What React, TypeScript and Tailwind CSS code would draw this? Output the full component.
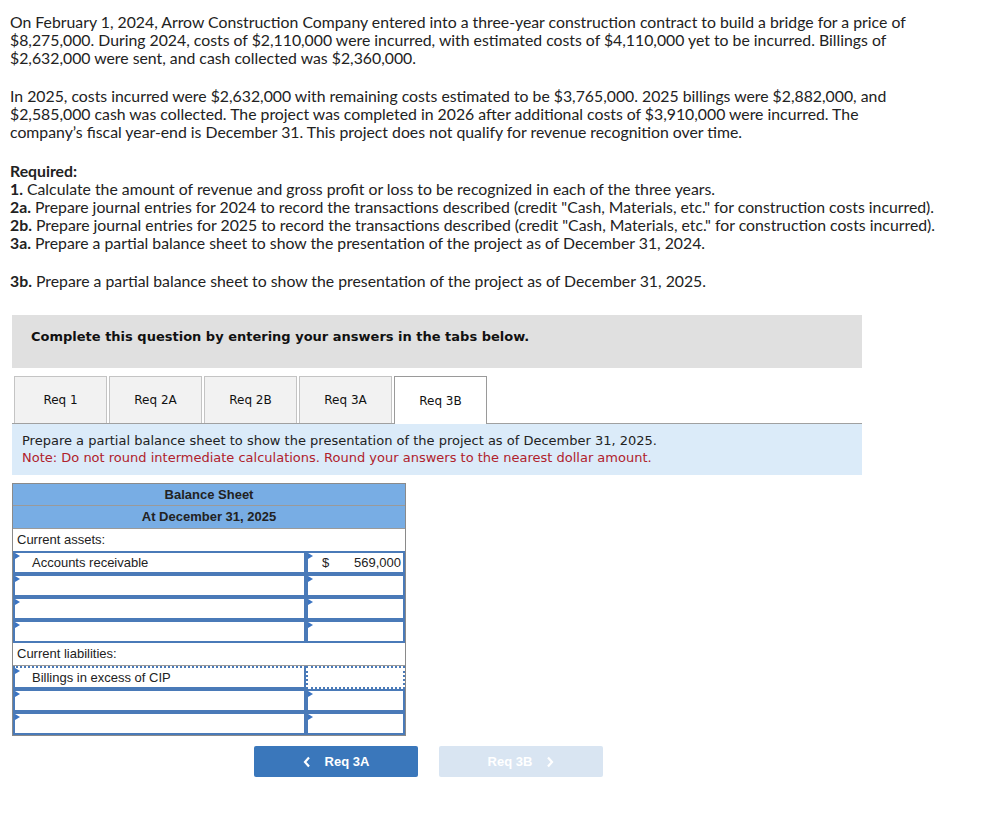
import React from 'react';

const body = { fontFamily: 'Lato, "Open Sans", sans-serif' };
const verdana = { fontFamily: '"DejaVu Sans", Verdana, sans-serif' };
const arial = { fontFamily: '"Liberation Sans", Arial, sans-serif' };

const tabs = ['Req 1', 'Req 2A', 'Req 2B', 'Req 3A', 'Req 3B'];

function Marker() {
  return (
    <span className="absolute left-0 top-0 w-0 h-0 border-t-[3px] border-b-[3px] border-l-[5px] border-t-transparent border-b-transparent border-l-[#3b74c2]" />
  );
}

function InputRow({ label, amount, dotted }: { label?: string; amount?: string; dotted?: boolean }) {
  return (
    <div className="flex h-[23px]">
      <div
        className="relative w-[293px] h-full border-2 border-[#4a7ab8] flex items-center pl-[17px] text-[13px] text-[#222]"
        style={dotted ? { borderTopStyle: 'dotted' } : undefined}
      >
        <Marker />
        {label}
      </div>
      <div
        className={
          'relative flex-1 h-full border-2 border-[#4a7ab8] flex items-center justify-between pl-[14px] pr-[2px] text-[13px] text-[#222] ' +
          (dotted ? 'border-dotted' : '')
        }
      >
        {!dotted && <Marker />}
        {amount && (
          <>
            <span>$</span>
            <span>{amount}</span>
          </>
        )}
      </div>
    </div>
  );
}

function LabelRow({ text }: { text: string }) {
  return (
    <div className="h-[23px] flex items-center pl-[4px] text-[13px] text-[#222] border-b border-[#9a9a9a]">
      {text}
    </div>
  );
}

export default function App() {
  return (
    <div className="w-[990px] h-[816px] bg-white">
      <div className="px-[10px] pt-[13px] text-[15.8px] leading-[18.1px] text-[#222] whitespace-nowrap" style={body}>
        <p>
          On February 1, 2024, Arrow Construction Company entered into a three-year construction contract to build a bridge for a price of
          <br />
          $8,275,000. During 2024, costs of $2,110,000 were incurred, with estimated costs of $4,110,000 yet to be incurred. Billings of
          <br />
          $2,632,000 were sent, and cash collected was $2,360,000.
        </p>
        <p className="mt-[20px]">
          In 2025, costs incurred were $2,632,000 with remaining costs estimated to be $3,765,000. 2025 billings were $2,882,000, and
          <br />
          $2,585,000 cash was collected. The project was completed in 2026 after additional costs of $3,910,000 were incurred. The
          <br />
          company’s fiscal year-end is December 31. This project does not qualify for revenue recognition over time.
        </p>
        <p className="mt-[20px]">
          <b>Required:</b>
          <br />
          <b>1.</b> Calculate the amount of revenue and gross profit or loss to be recognized in each of the three years.
          <br />
          <b>2a.</b> Prepare journal entries for 2024 to record the transactions described (credit "Cash, Materials, etc." for construction costs incurred).
          <br />
          <b>2b.</b> Prepare journal entries for 2025 to record the transactions described (credit "Cash, Materials, etc." for construction costs incurred).
          <br />
          <b>3a.</b> Prepare a partial balance sheet to show the presentation of the project as of December 31, 2024.
        </p>
        <p className="mt-[20px]">
          <b>3b.</b> Prepare a partial balance sheet to show the presentation of the project as of December 31, 2025.
        </p>
      </div>

      <div className="ml-[12px] w-[850px] mt-[25px]" style={verdana}>
        <div className="h-[53px] bg-[#e0e0e0] pl-[19px] pt-[14px] text-[13px] leading-[16px] font-bold text-[#111]">
          Complete this question by entering your answers in the tabs below.
        </div>

        <div className="mt-[8px] flex gap-[2px] pl-[2px] border-b border-[#a0a0a0]">
          {tabs.map((t, i) => (
            <div
              key={t}
              className={
                'w-[93px] h-[47px] flex items-center justify-center text-[12px] text-[#111] border border-b-0 ' +
                (i === 4 ? 'bg-white border-[#9a9a9a] -mb-px h-[48px]' : 'bg-[#f2f2f2] border-[#c4c4c4]')
              }
            >
              {t}
            </div>
          ))}
        </div>

        <div className="h-[51px] bg-[#dbebf9] pl-[10px] pt-[8px] text-[13px] leading-[17px]">
          <div className="text-[#222]">Prepare a partial balance sheet to show the presentation of the project as of December 31, 2025.</div>
          <div className="text-[#b0222c]">Note: Do not round intermediate calculations. Round your answers to the nearest dollar amount.</div>
        </div>
      </div>

      <div className="ml-[12px] mt-[8px] w-[394px] border border-[#8a8a8a]" style={arial}>
        <div className="h-[22px] bg-[#78ade4] border-b border-[#9a9a9a] flex items-center justify-center font-bold text-[13px] text-[#222]">
          Balance Sheet
        </div>
        <div className="h-[23px] bg-[#78ade4] border-b border-[#9a9a9a] flex items-center justify-center font-bold text-[13px] text-[#222]">
          At December 31, 2025
        </div>
        <div className="h-[22px] flex items-center pl-[4px] text-[13px] text-[#222]">Current assets:</div>
        <InputRow label="Accounts receivable" amount="569,000" />
        <InputRow />
        <InputRow />
        <InputRow />
        <LabelRow text="Current liabilities:" />
        <InputRow label="Billings in excess of CIP" dotted />
        <InputRow />
        <InputRow />
      </div>

      <div className="flex gap-[21px] ml-[254px] mt-[10px]" style={arial}>
        <button className="w-[164px] h-[31px] rounded-[2px] bg-[#3a77bb] text-white font-bold text-[13px] flex items-center justify-center gap-[14px]">
          <svg width="8" height="12" viewBox="0 0 8 12">
            <path d="M6 1.5 L2 6 L6 10.5" stroke="white" strokeWidth="2.2" fill="none" />
          </svg>
          Req 3A
        </button>
        <button className="w-[164px] h-[31px] rounded-[2px] bg-[#d9e5f2] text-white font-bold text-[13px] flex items-center justify-center gap-[14px]">
          Req 3B
          <svg width="8" height="12" viewBox="0 0 8 12">
            <path d="M2 1.5 L6 6 L2 10.5" stroke="white" strokeWidth="2.2" fill="none" />
          </svg>
        </button>
      </div>
    </div>
  );
}
